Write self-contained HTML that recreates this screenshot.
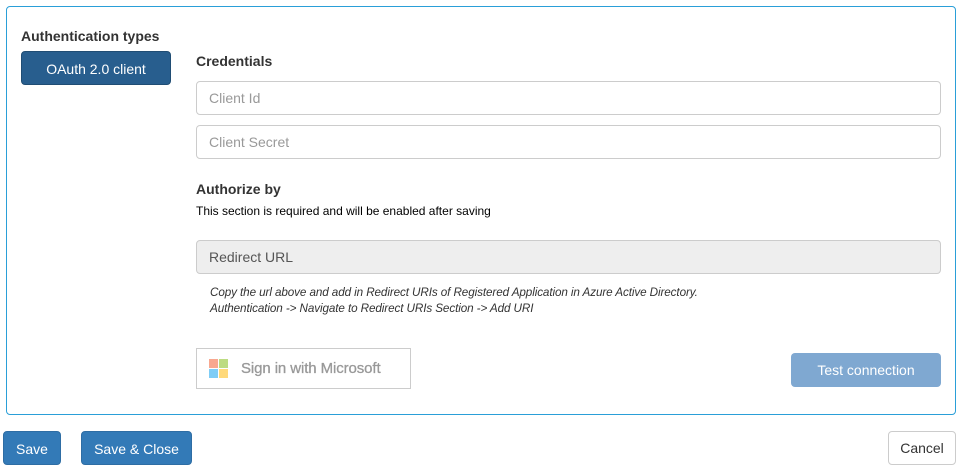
<!DOCTYPE html>
<html><head><style>
*{box-sizing:border-box;margin:0;padding:0}
body{width:960px;height:473px;background:#fff;font-family:"Liberation Sans",Arial,sans-serif;color:#333;position:relative;overflow:hidden}
.a{position:absolute}
.panel{left:6px;top:6px;width:950px;height:409px;border:1px solid #2a9fd8;border-radius:4px}
.b{font-weight:bold;font-size:14px;color:#333}
.inp{left:196px;width:745px;height:34px;border:1px solid #ccc;border-radius:4px;font-size:14px;color:#999;padding:0 12px;line-height:32px}
.btn{border-radius:4px;color:#fff;font-size:14px;text-align:center}
</style></head><body>
<div class="a panel"></div>
<div class="a b" style="left:21px;top:28px">Authentication types</div>
<div class="a btn" style="left:21px;top:51px;width:150px;height:34px;line-height:34px;background:#285e8e;border:1px solid #204d74">OAuth 2.0 client</div>
<div class="a b" style="left:196px;top:53px">Credentials</div>
<div class="a inp" style="top:81px">Client Id</div>
<div class="a inp" style="top:125px">Client Secret</div>
<div class="a b" style="left:196px;top:181px">Authorize by</div>
<div class="a" style="left:196px;top:204px;font-size:12px;color:#000">This section is required and will be enabled after saving</div>
<div class="a inp" style="top:240px;background:#eee;color:#555">Redirect URL</div>
<div class="a" style="left:210px;top:285px;font-size:11.7px;font-style:italic;line-height:16px;color:#333;letter-spacing:-0.1px">Copy the url above and add in Redirect URIs of Registered Application in Azure Active Directory.<br>Authentication -&gt; Navigate to Redirect URIs Section -&gt; Add URI</div>
<div class="a" style="left:196px;top:348px;width:215px;height:41px;border:1px solid #ccc;">
<div class="a" style="left:12px;top:10px;width:9px;height:9px;background:#f8a890"></div>
<div class="a" style="left:22px;top:10px;width:9px;height:9px;background:#bddc82"></div>
<div class="a" style="left:12px;top:20px;width:9px;height:9px;background:#7fcdf6"></div>
<div class="a" style="left:22px;top:20px;width:9px;height:9px;background:#ffd97a"></div>
<div class="a" style="left:44px;top:11px;font-size:15px;color:#999;letter-spacing:-0.1px;-webkit-text-stroke:0.3px #999">Sign in with Microsoft</div>
</div>
<div class="a btn" style="left:791px;top:353px;width:150px;height:34px;line-height:34px;background:#7fa8d1">Test connection</div>
<div class="a btn" style="left:3px;top:431px;width:58px;height:34px;line-height:34px;background:#337ab7;border:1px solid #2e6da4">Save</div>
<div class="a btn" style="left:81px;top:431px;width:111px;height:34px;line-height:34px;background:#337ab7;border:1px solid #2e6da4">Save &amp; Close</div>
<div class="a btn" style="left:888px;top:431px;width:68px;height:34px;line-height:32px;background:#fff;border:1px solid #ccc;color:#333">Cancel</div>
</body></html>
